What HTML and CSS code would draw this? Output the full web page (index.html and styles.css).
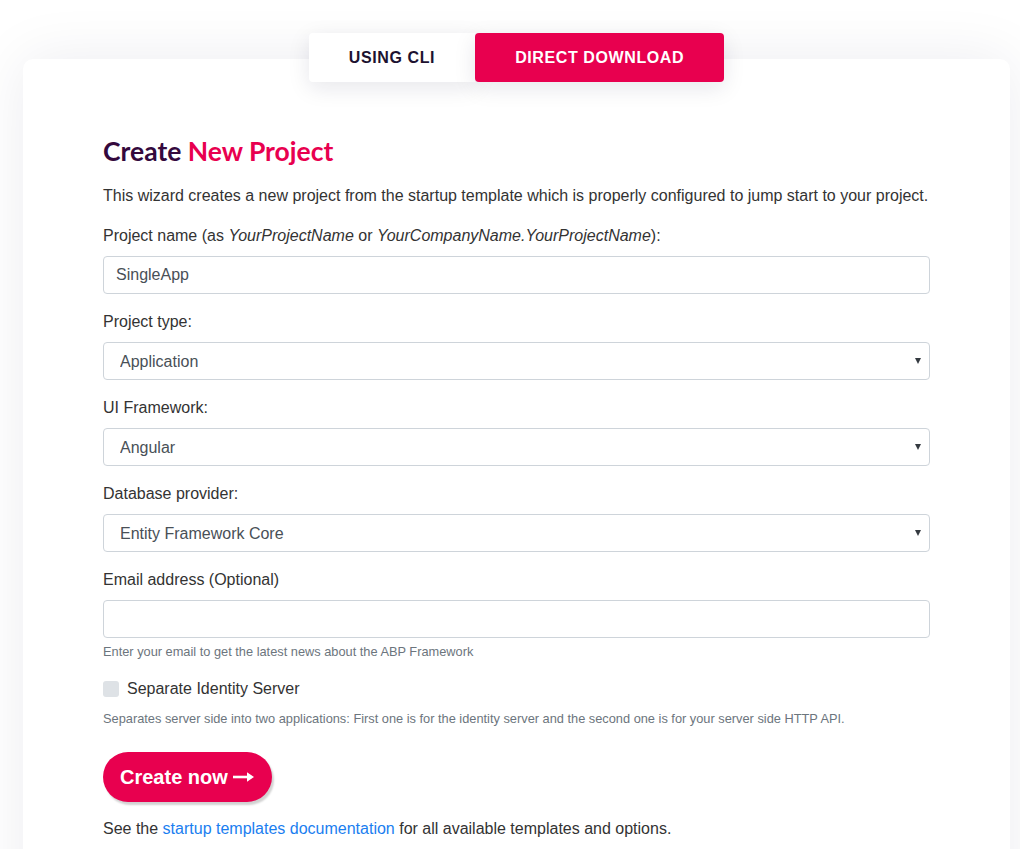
FILE: index.html
```html
<!DOCTYPE html>
<html lang="en">
<head>
<meta charset="utf-8">
<title>Create New Project</title>
<link rel="stylesheet" href="styles.css">
</head>
<body>
<div class="page">
  <div class="card">
    <div class="tabs">
      <a class="tab">USING CLI</a>
      <a class="tab active">DIRECT DOWNLOAD</a>
    </div>
    <h2 class="title">Create <span class="accent">New Project</span></h2>
    <p class="lead">This wizard creates a new project from the startup template which is properly configured to jump start to your project.</p>

    <div class="group">
      <label class="label">Project name (as <i>YourProjectName</i> or <i>YourCompanyName.YourProjectName</i>):</label>
      <input class="control" type="text" value="SingleApp">
    </div>

    <div class="group">
      <label class="label">Project type:</label>
      <div class="select-wrap"><select class="control"><option>Application</option></select></div>
    </div>

    <div class="group">
      <label class="label">UI Framework:</label>
      <div class="select-wrap"><select class="control"><option>Angular</option></select></div>
    </div>

    <div class="group">
      <label class="label">Database provider:</label>
      <div class="select-wrap"><select class="control"><option>Entity Framework Core</option></select></div>
    </div>

    <div class="group">
      <label class="label">Email address (Optional)</label>
      <input class="control" type="text" value="">
      <small class="help">Enter your email to get the latest news about the ABP Framework</small>
    </div>

    <div class="group">
      <div class="check"><span class="box"></span><span>Separate Identity Server</span></div>
      <small class="help help-2">Separates server side into two applications: First one is for the identity server and the second one is for your server side HTTP API.</small>
    </div>

    <button class="btn">Create now <svg class="arrow" width="22" height="12" viewBox="0 0 22 12"><path d="M0 6H18" stroke="#fff" stroke-width="2.6"/><path d="M14 1.2L21 6L14 10.8Z" fill="#fff"/></svg></button>

    <p class="foot">See the <a class="link" href="#">startup templates documentation</a> for all available templates and options.</p>
  </div>
</div>
</body>
</html>
```

FILE: styles.css
```css
html, body {
  margin: 0;
  padding: 0;
  background: #ffffff;
  font-family: "Liberation Sans", Arial, sans-serif;
  color: #333333;
  font-size: 16px;
  line-height: 24px;
}

.page {
  padding: 59px 10px 0 23px;
  height: 790px;
  overflow: hidden;
}

.card {
  display: flow-root;
  background: #ffffff;
  border-radius: 10px;
  box-shadow: 0 0 60px rgba(20, 20, 60, 0.08);
  padding: 0 80px 40px;
  height: 860px;
}

.tabs {
  display: flex;
  justify-content: center;
  margin-top: -26px;
}

.tab {
  display: block;
  height: 49px;
  line-height: 49px;
  padding: 0 40px;
  font-weight: 700;
  font-size: 16px;
  letter-spacing: 0.6px;
  color: #1d1230;
  background: #ffffff;
  border-radius: 4px 0 0 4px;
  box-shadow: 0 6px 22px rgba(20, 20, 60, 0.10);
}

.tab.active {
  background: #e8004f;
  color: #ffffff;
  border-radius: 4px;
}

.title {
  margin: 52px 0 0;
  font-family: "Lato", sans-serif;
  font-weight: 700;
  font-size: 26.5px;
  line-height: 34px;
  color: #34093d;
}

.accent {
  color: #e8004f;
}

.lead {
  margin: 16px 0 16px;
}

.group {
  margin-bottom: 16px;
}

.label {
  display: block;
  margin-bottom: 8px;
}

.control {
  display: block;
  box-sizing: border-box;
  width: 100%;
  height: 38px;
  padding: 6px 16px;
  font-family: "Liberation Sans", Arial, sans-serif;
  font-size: 16px;
  color: #495057;
  background: #ffffff;
  border: 1px solid #ced4da;
  border-radius: 4px;
  -webkit-appearance: none;
  appearance: none;
  outline: none;
}

input.control {
  padding-left: 12px;
}

.select-wrap {
  position: relative;
}

.select-wrap::after {
  content: "";
  position: absolute;
  right: 9px;
  top: 16px;
  border-left: 3.5px solid transparent;
  border-right: 3.5px solid transparent;
  border-top: 6px solid #343a40;
}

.help {
  display: block;
  margin-top: 4px;
  font-size: 12.8px;
  line-height: 19px;
  color: #6c757d;
}

.help-2 {
  margin-top: 8px;
}

.check {
  display: flex;
  align-items: center;
  gap: 8px;
  color: #333333;
}

.box {
  display: block;
  width: 16px;
  height: 16px;
  border-radius: 3px;
  background: #dee2e6;
}

.btn {
  display: inline-flex;
  align-items: center;
  gap: 5px;
  margin-top: 8px;
  height: 50px;
  padding: 0 17px;
  border: none;
  border-radius: 25px;
  background: #e8004f;
  color: #ffffff;
  font-family: "Liberation Sans", Arial, sans-serif;
  font-weight: 700;
  font-size: 20px;
  box-shadow: 2px 3px 2px rgba(0, 0, 0, 0.18);
}

.arrow {
  display: block;
}

.foot {
  margin: 15px 0 0;
}

.link {
  color: #1a7ef0;
  text-decoration: none;
}
```
